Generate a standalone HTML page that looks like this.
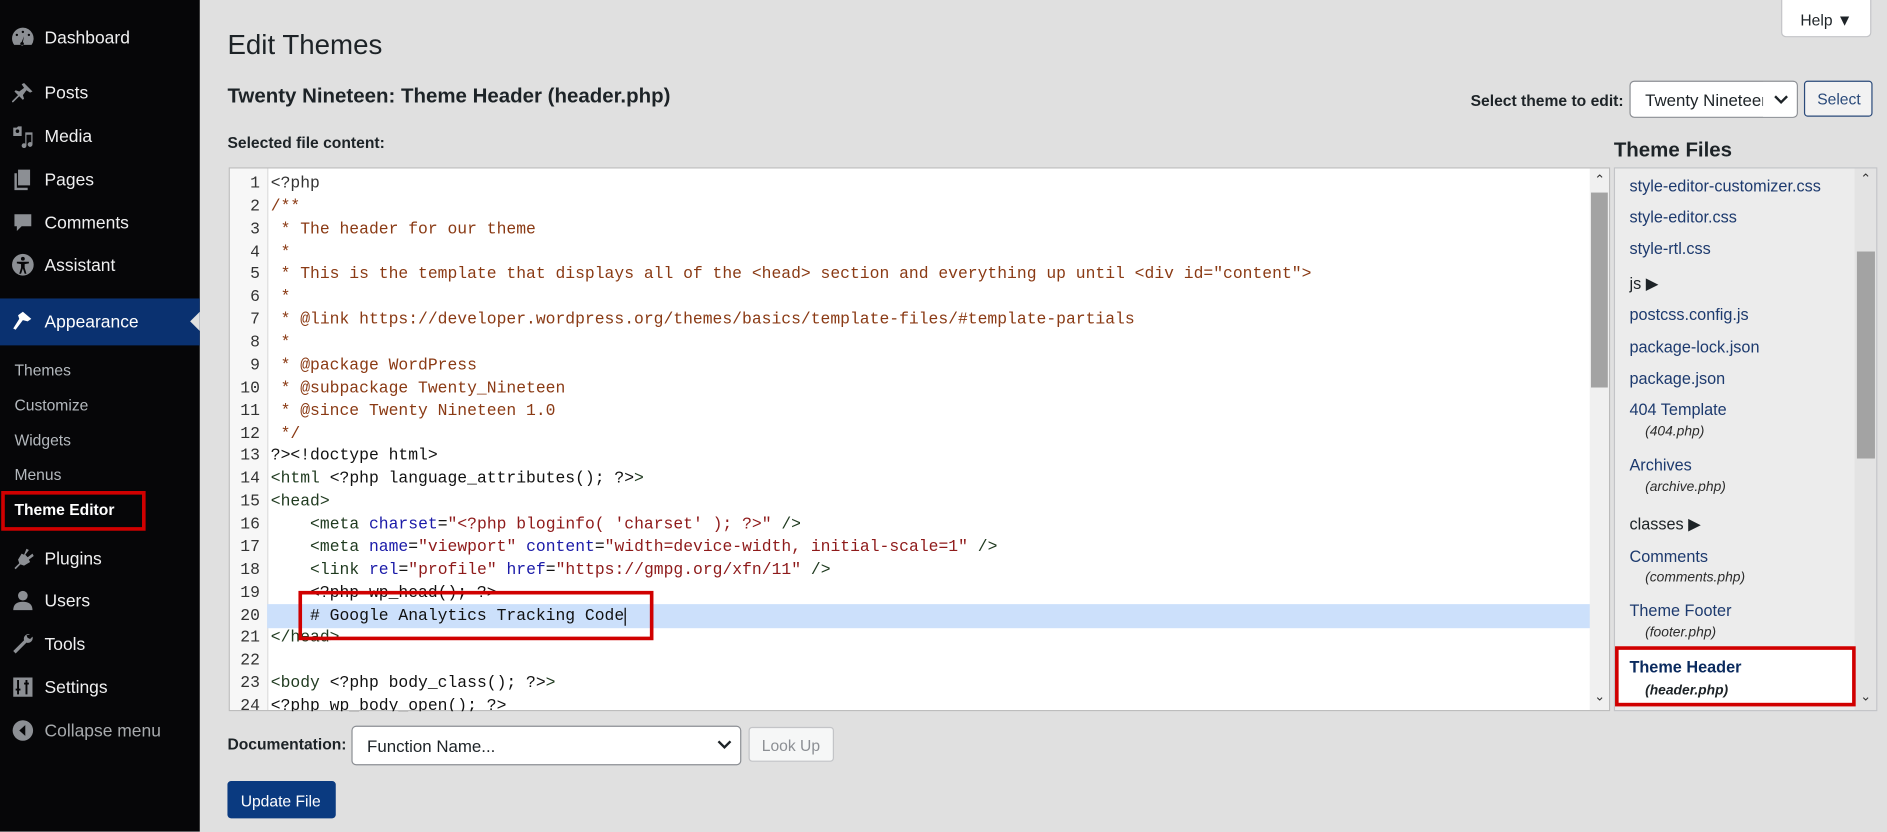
<!DOCTYPE html>
<html><head><meta charset="utf-8"><style>
html,body{margin:0;padding:0;width:1887px;height:832px;overflow:hidden;background:#e0e0e0}
#w{position:absolute;left:0;top:0;width:1568px;height:691px;transform:scale(1.20344);transform-origin:0 0;font-family:"Liberation Sans",sans-serif;background:#e0e0e0}
.a{position:absolute;white-space:nowrap}
#sb{position:absolute;left:0;top:0;width:166px;height:691px;background:#060608}
.mi{position:absolute;left:37px;color:#f0f0f1;font-size:14.5px;margin-top:2px}
.ic{position:absolute;left:9px;width:20px;height:20px}
.sub{position:absolute;left:12px;color:#b4b9be;font-size:13px;margin-top:1px}
#code{position:absolute;left:190px;top:139px;width:1148px;height:452px;background:#fff;border:1px solid #bbb;box-sizing:border-box;overflow:hidden}
#gut{position:absolute;left:0;top:0;width:31px;height:100%;background:#f7f7f7;border-right:1px solid #ddd}
.ln{position:absolute;width:30px;text-align:right;font-family:"Liberation Mono",monospace;font-size:13.6px;color:#333}
.cl{position:absolute;left:35px;font-family:"Liberation Mono",monospace;font-size:13.6px;color:#111;white-space:pre}
.c{color:#8a3a14}.t{color:#1f3a1f}.at{color:#1a1aa8}.s{color:#8e1a1a}.m{color:#333}
.f{position:absolute;left:12px;color:#1d3a6e;font-size:13.5px;margin-top:1px}
.fi{position:absolute;left:25px;color:#2c2c2c;font-size:11.5px;font-style:italic;margin-top:1px}
</style></head><body><div id="w">
<div id="sb">
<svg class="ic" style="top:21px" viewBox="0 0 20 20"><path d="M10 2a9 9 0 0 0-9 9c0 2 .7 3.8 1.8 5.3h14.4A9 9 0 0 0 10 2zm0 2.5a1 1 0 1 1 0 2 1 1 0 0 1 0-2zM5 7a1 1 0 1 1 0 2 1 1 0 0 1 0-2zm10 0a1 1 0 1 1 0 2 1 1 0 0 1 0-2zm-4 2l-1 5a1.5 1.5 0 1 1-1-.1z" fill="#8c8f94"/></svg>
<div class="mi" style="top:22px">Dashboard</div>
<svg class="ic" style="top:67px" viewBox="0 0 20 20"><path d="M11 2l7 7-2 1-3-2-3 4 1 3-1 1-3-3-5 5H1v-1l5-5-3-3 1-1 3 1 4-3-2-3z" fill="#8c8f94"/></svg>
<div class="mi" style="top:68px">Posts</div>
<svg class="ic" style="top:103px" viewBox="0 0 20 20"><path d="M2 3h3l1-1h3v8H2zM12 7h6v10a2 2 0 1 1-1-1.7V9h-4v9a2 2 0 1 1-1-1.7z" fill="#8c8f94"/><circle cx="5.5" cy="6" r="1.5" fill="#060608"/></svg>
<div class="mi" style="top:104px">Media</div>
<svg class="ic" style="top:139px" viewBox="0 0 20 20"><path d="M6 2h10v13H6zM3 5h2v12h9v2H3z" fill="#8c8f94"/></svg>
<div class="mi" style="top:140px">Pages</div>
<svg class="ic" style="top:175px" viewBox="0 0 20 20"><path d="M3 3h14v10H9l-4 4v-4H3z" fill="#8c8f94"/></svg>
<div class="mi" style="top:176px">Comments</div>
<svg class="ic" style="top:210px" viewBox="0 0 20 20"><circle cx="10" cy="10" r="9" fill="#8c8f94"/><circle cx="10" cy="5" r="1.6" fill="#060608"/><path d="M5 7.5h10v1.3l-3.5.7v3l1.5 5h-1.5L10 13l-1.5 4.5H7l1.5-5v-3L5 8.8z" fill="#060608"/></svg>
<div class="mi" style="top:211px">Assistant</div>
<div style="position:absolute;left:0;top:248px;width:166px;height:39px;background:#0a3170"></div>
<div style="position:absolute;left:158px;top:259px;width:0;height:0;border-top:8px solid transparent;border-bottom:8px solid transparent;border-right:8px solid #e0e0e0"></div>
<svg class="ic" style="top:257px" viewBox="0 0 20 20"><path d="M10 2l7 6-3 2-4-1-6 8-2-1 5-8-1-3z" fill="#fff"/></svg>
<div class="mi" style="top:258px;color:#fff">Appearance</div>
<div class="sub" style="top:299px">Themes</div>
<div class="sub" style="top:328px">Customize</div>
<div class="sub" style="top:357px">Widgets</div>
<div class="sub" style="top:386px">Menus</div>
<div style="position:absolute;left:1px;top:408px;width:114px;height:27px;border:3px solid #d00000"></div>
<div class="sub" style="top:415px;color:#fff;font-weight:bold">Theme Editor</div>
<svg class="ic" style="top:454px" viewBox="0 0 20 20"><path d="M13 2l2 1-3 4 2 2 4-3 1 2-4 3 1 2-5 3-3-1-4 4-1-1 4-4-1-3 3-5 2 1z" fill="#8c8f94"/></svg>
<div class="mi" style="top:455px">Plugins</div>
<svg class="ic" style="top:489px" viewBox="0 0 20 20"><circle cx="10" cy="6" r="4" fill="#8c8f94"/><path d="M2 18c0-5 3-7 8-7s8 2 8 7z" fill="#8c8f94"/></svg>
<div class="mi" style="top:490px">Users</div>
<svg class="ic" style="top:525px" viewBox="0 0 20 20"><path d="M16 2a4 4 0 0 0-5 5L2 16l2 2 9-9a4 4 0 0 0 5-5l-2 2-2-1-1-2z" fill="#8c8f94"/></svg>
<div class="mi" style="top:526px">Tools</div>
<svg class="ic" style="top:561px" viewBox="0 0 20 20"><path d="M2 2h16v16H2z" fill="#8c8f94"/><path d="M6 4v12M13 4v12M4 12h4M11 7h4" stroke="#060608" stroke-width="1.6"/></svg>
<div class="mi" style="top:562px">Settings</div>
<svg class="ic" style="top:597px" viewBox="0 0 20 20"><circle cx="10" cy="10" r="8.5" fill="#8c8f94"/><path d="M12 5.5L7 10l5 4.5z" fill="#060608"/></svg>
<div class="mi" style="top:598px;color:#a7aaad">Collapse menu</div>
</div>

<div style="position:absolute;left:1480px;top:-2px;width:75px;height:33px;background:#fff;border:1px solid #c3c4c7;border-radius:0 0 4px 4px;box-sizing:border-box"></div>
<div class="a" style="left:1496px;top:9px;font-size:13px;color:#1d2327">Help &#9660;</div>

<div class="a" style="left:189px;top:24px;font-size:23px;color:#1d2327">Edit Themes</div>
<div class="a" style="left:189px;top:70px;font-size:17px;font-weight:bold;color:#1d2327">Twenty Nineteen: Theme Header (header.php)</div>
<div class="a" style="left:189px;top:111px;font-size:13px;font-weight:bold;color:#1d2327">Selected file content:</div>

<div class="a" style="left:1222px;top:76px;font-size:13px;font-weight:bold;color:#1d2327">Select theme to edit:</div>
<div style="position:absolute;left:1354px;top:67px;width:140px;height:31px;background:#fff;border:1px solid #8c8f94;border-radius:4px;box-sizing:border-box;overflow:hidden"><div class="a" style="left:12px;top:7px;font-size:14px;color:#1d2327">Twenty Nineteen</div><div style="position:absolute;right:0;top:0;width:28px;height:30px;background:#fff"></div><svg style="position:absolute;right:7px;top:10px" width="12" height="9" viewBox="0 0 12 9"><path d="M1 2l5 5 5-5" stroke="#1d2327" stroke-width="2" fill="none"/></svg></div>
<div style="position:absolute;left:1499px;top:67px;width:57px;height:30px;background:#f2f2f2;border:1px solid #2a4a7a;border-radius:3px;box-sizing:border-box"></div>
<div class="a" style="left:1510px;top:75px;font-size:13px;color:#2a4a7a">Select</div>

<div class="a" style="left:1341px;top:115px;font-size:17px;font-weight:bold;color:#1d2327">Theme Files</div>

<div id="code">
<div id="gut"></div>
<div style="position:absolute;left:31px;top:362px;width:1101px;height:20px;background:#cce0fb"></div>
<div style="position:absolute;right:0;top:0;width:16px;height:100%;background:#f0f0f0"></div>
<div style="position:absolute;right:1px;top:20px;width:14px;height:162px;background:#a3a3a3"></div>
<div class="a" style="right:3px;top:3px;font-size:11px;color:#333">&#8963;</div>
<div class="a" style="right:3px;top:432px;font-size:11px;color:#333">&#8964;</div>
</div>
<div style="position:absolute;left:190px;top:139px;width:1130px;height:452px;overflow:hidden">
<div id="lines"></div>
</div>

<div style="position:absolute;left:1341px;top:139px;width:219px;height:452px;background:#ececec;border:1px solid #c3c4c7;box-sizing:border-box;overflow:hidden">
<div style="position:absolute;right:0;top:0;width:18px;height:100%;background:#e3e3e3"></div>
<div style="position:absolute;right:1px;top:69px;width:15px;height:172px;background:#a3a3a3"></div>
<div class="a" style="right:4px;top:2px;font-size:11px;color:#333">&#8963;</div>
<div class="a" style="right:4px;top:432px;font-size:11px;color:#333">&#8964;</div>
<div class="f" style="top:6px">style-editor-customizer.css</div>
<div class="f" style="top:32px">style-editor.css</div>
<div class="f" style="top:58px">style-rtl.css</div>
<div class="f" style="top:87px;color:#1d2327">js &#9654;&#xFE0E;</div>
<div class="f" style="top:113px">postcss.config.js</div>
<div class="f" style="top:140px">package-lock.json</div>
<div class="f" style="top:166px">package.json</div>
<div class="f" style="top:192px">404 Template</div>
<div class="fi" style="top:212px">(404.php)</div>
<div class="f" style="top:238px">Archives</div>
<div class="fi" style="top:258px">(archive.php)</div>
<div class="f" style="top:287px;color:#1d2327">classes &#9654;&#xFE0E;</div>
<div class="f" style="top:314px">Comments</div>
<div class="fi" style="top:333px">(comments.php)</div>
<div class="f" style="top:359px">Theme Footer</div>
<div class="fi" style="top:379px">(footer.php)</div>
<div style="position:absolute;left:0;top:397px;width:200px;height:50px;background:#fff;border:3px solid #d00000;box-sizing:border-box"></div>
<div class="f" style="top:406px;font-weight:bold;color:#0a2a5e">Theme Header</div>
<div class="fi" style="top:427px;font-weight:bold;color:#1d2327">(header.php)</div>
</div>

<div class="a" style="left:189px;top:611px;font-size:13px;font-weight:bold;color:#1d2327">Documentation:</div>
<div style="position:absolute;left:292px;top:603px;width:324px;height:33px;background:#fff;border:1px solid #8c8f94;border-radius:4px;box-sizing:border-box"></div>
<div class="a" style="left:305px;top:612px;font-size:14px;color:#1d2327">Function Name...</div>
<svg style="position:absolute;left:596px;top:614px" width="12" height="9" viewBox="0 0 12 9"><path d="M1 2l5 5 5-5" stroke="#1d2327" stroke-width="2" fill="none"/></svg>
<div style="position:absolute;left:622px;top:604px;width:71px;height:29px;background:#f6f7f7;border:1px solid #c3c4c7;border-radius:3px;box-sizing:border-box"></div>
<div class="a" style="left:633px;top:612px;font-size:13px;color:#8c8f94">Look Up</div>
<div style="position:absolute;left:189px;top:649px;width:90px;height:31px;background:#0a3a80;border-radius:3px"></div>
<div class="a" style="left:200px;top:658px;font-size:13px;color:#fff">Update File</div>

<div style="position:absolute;left:248px;top:491px;width:295px;height:41px;border:3px solid #d00000;box-sizing:border-box"></div>
</div>
<script>
var L=[
'<span class="m">&lt;?php</span>',
'<span class="c">/**</span>',
'<span class="c"> * The header for our theme</span>',
'<span class="c"> *</span>',
'<span class="c"> * This is the template that displays all of the &lt;head&gt; section and everything up until &lt;div id="content"&gt;</span>',
'<span class="c"> *</span>',
'<span class="c"> * @link https://developer.wordpress.org/themes/basics/template-files/#template-partials</span>',
'<span class="c"> *</span>',
'<span class="c"> * @package WordPress</span>',
'<span class="c"> * @subpackage Twenty_Nineteen</span>',
'<span class="c"> * @since Twenty Nineteen 1.0</span>',
'<span class="c"> */</span>',
'?&gt;&lt;!doctype html&gt;',
'<span class="t">&lt;html</span> &lt;?php language_attributes(); ?&gt;<span class="t">&gt;</span>',
'<span class="t">&lt;head&gt;</span>',
'    <span class="t">&lt;meta</span> <span class="at">charset</span>=<span class="s">"&lt;?php bloginfo( \'charset\' ); ?&gt;"</span> <span class="t">/&gt;</span>',
'    <span class="t">&lt;meta</span> <span class="at">name</span>=<span class="s">"viewport"</span> <span class="at">content</span>=<span class="s">"width=device-width, initial-scale=1"</span> <span class="t">/&gt;</span>',
'    <span class="t">&lt;link</span> <span class="at">rel</span>=<span class="s">"profile"</span> <span class="at">href</span>=<span class="s">"https://gmpg.org/xfn/11"</span> <span class="t">/&gt;</span>',
'    &lt;?php wp_head(); ?&gt;',
'    # Google Analytics Tracking Code<span style="border-left:1px solid #000"></span>',
'<span class="t">&lt;/head&gt;</span>',
'',
'<span class="t">&lt;body</span> &lt;?php body_class(); ?&gt;<span class="t">&gt;</span>',
'&lt;?php wp_body_open(); ?&gt;'];
var h='';for(var i=0;i<L.length;i++){var y=7+i*18.87;
h+='<div class="ln" style="left:-4px;top:'+y+'px">'+(i+1)+'</div><div class="cl" style="top:'+y+'px">'+L[i]+'</div>';}
document.getElementById('lines').innerHTML=h;
</script>
</body></html>
